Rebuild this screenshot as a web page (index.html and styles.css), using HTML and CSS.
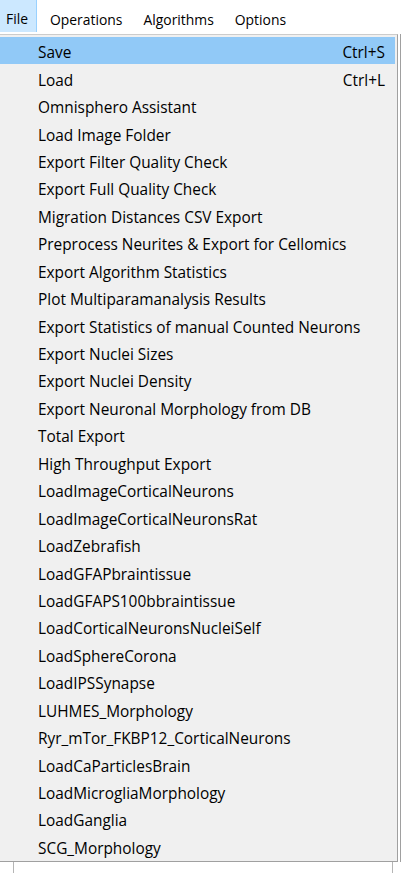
FILE: index.html
```html
<!DOCTYPE html>
<html lang="en">
<head>
    <meta charset="UTF-8">
    <meta name="viewport" content="width=device-width, initial-scale=1.0">
    <title>Omnisphero - File menu</title>
    <link rel="stylesheet" href="styles.css">
</head>
<body>
    <div class="menubar">
        <div class="menubar-item active">File</div>
        <div class="menubar-item">Operations</div>
        <div class="menubar-item">Algorithms</div>
        <div class="menubar-item">Options</div>
    </div>

    <div class="dropdown">
        <ul class="menu">
            <li class="menu-item selected"><span>Save</span><span class="shortcut">Ctrl+S</span></li>
            <li class="menu-item"><span>Load</span><span class="shortcut">Ctrl+L</span></li>
            <li class="menu-item">Omnisphero Assistant</li>
            <li class="menu-item">Load Image Folder</li>
            <li class="menu-item">Export Filter Quality Check</li>
            <li class="menu-item">Export Full Quality Check</li>
            <li class="menu-item">Migration Distances CSV Export</li>
            <li class="menu-item">Preprocess Neurites &amp; Export for Cellomics</li>
            <li class="menu-item">Export Algorithm Statistics</li>
            <li class="menu-item">Plot Multiparamanalysis Results</li>
            <li class="menu-item">Export Statistics of manual Counted Neurons</li>
            <li class="menu-item">Export Nuclei Sizes</li>
            <li class="menu-item">Export Nuclei Density</li>
            <li class="menu-item">Export Neuronal Morphology from DB</li>
            <li class="menu-item">Total Export</li>
            <li class="menu-item">High Throughput Export</li>
            <li class="menu-item">LoadImageCorticalNeurons</li>
            <li class="menu-item">LoadImageCorticalNeuronsRat</li>
            <li class="menu-item">LoadZebrafish</li>
            <li class="menu-item">LoadGFAPbraintissue</li>
            <li class="menu-item">LoadGFAPS100bbraintissue</li>
            <li class="menu-item">LoadCorticalNeuronsNucleiSelf</li>
            <li class="menu-item">LoadSphereCorona</li>
            <li class="menu-item">LoadIPSSynapse</li>
            <li class="menu-item">LUHMES_Morphology</li>
            <li class="menu-item">Ryr_mTor_FKBP12_CorticalNeurons</li>
            <li class="menu-item">LoadCaParticlesBrain</li>
            <li class="menu-item">LoadMicrogliaMorphology</li>
            <li class="menu-item">LoadGanglia</li>
            <li class="menu-item">SCG_Morphology</li>
        </ul>
    </div>

    <div class="window-behind"></div>
</body>
</html>
```

FILE: styles.css
```css
* {
    margin: 0;
    padding: 0;
    box-sizing: border-box;
}

body {
    font-family: 'Open Sans', 'Noto Sans', sans-serif;
    font-size: 15.4px;
    color: #000;
    background: #fff;
    width: 405px;
    height: 873px;
    overflow: hidden;
}

/* top menu bar */
.menubar {
    display: flex;
    height: 34px;
    background: #fff;
    font-size: 13.9px;
}

.menubar-item {
    display: flex;
    align-items: center;
    padding: 4px 8px 0 13px;
}

.menubar-item.active {
    background: #cce8ff;
    border-right: 1px solid #99d1ff;
    padding: 4px 8px 0 6px;
    height: 32px;
}

/* dropdown menu */
.dropdown {
    width: 401px;
    border-right: 1px solid #a0a0a0;
}

.menu {
    list-style: none;
    width: 398px;
    background: #f0f0f0;
    border-top: 1px solid #ccc;
    border-right: 1px solid #a0a0a0;
    border-bottom: 1px solid #a0a0a0;
    padding: 2px 2px 1px 0;
}

.menu-item {
    display: flex;
    align-items: center;
    justify-content: space-between;
    height: 27.45px;
    padding: 4px 10px 0 38px;
}

.menu-item.selected {
    background: #91c9f7;
}

.shortcut {
    color: #000;
}

/* the window that sits under the menu */
.window-behind {
    height: 20px;
    margin-left: 13px;
    width: 380px;
    border-left: 1px solid #b5b5b5;
    border-right: 1px solid #b5b5b5;
}
```
